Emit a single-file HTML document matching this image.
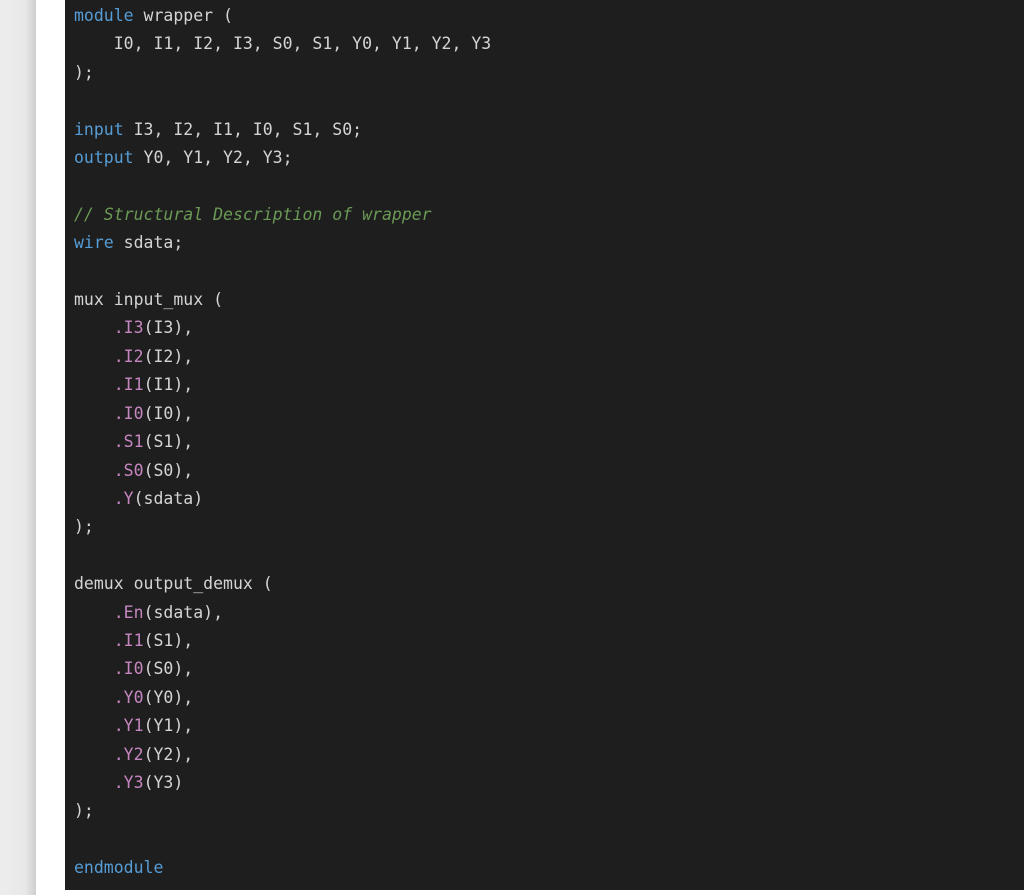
<!DOCTYPE html>
<html><head><style>
html,body{margin:0;padding:0;width:1024px;height:895px;background:#fff;overflow:hidden}
.side{position:absolute;left:0;top:0;width:36px;height:895px;background:linear-gradient(to right,#ededed 0,#e8e8e8 70%,#cfcfcf 100%)}
.code{position:absolute;left:65px;top:0;width:959px;height:890px;background:#1e1e1e}
pre{margin:0;padding:2px 0 0 9px;font-family:"DejaVu Sans Mono","Liberation Mono",monospace;font-size:16.5px;line-height:28.4px;color:#d4d4d4}
.k{color:#569cd6}.c{color:#6a9955;font-style:italic}.p{color:#c586c0}
</style></head><body>
<div class="side"></div>
<div class="code"><pre><span class="k">module</span> wrapper (
    I0, I1, I2, I3, S0, S1, Y0, Y1, Y2, Y3
);

<span class="k">input</span> I3, I2, I1, I0, S1, S0;
<span class="k">output</span> Y0, Y1, Y2, Y3;

<span class="c">// Structural Description of wrapper</span>
<span class="k">wire</span> sdata;

mux input_mux (
    <span class="p">.I3</span>(I3),
    <span class="p">.I2</span>(I2),
    <span class="p">.I1</span>(I1),
    <span class="p">.I0</span>(I0),
    <span class="p">.S1</span>(S1),
    <span class="p">.S0</span>(S0),
    <span class="p">.Y</span>(sdata)
);

demux output_demux (
    <span class="p">.En</span>(sdata),
    <span class="p">.I1</span>(S1),
    <span class="p">.I0</span>(S0),
    <span class="p">.Y0</span>(Y0),
    <span class="p">.Y1</span>(Y1),
    <span class="p">.Y2</span>(Y2),
    <span class="p">.Y3</span>(Y3)
);

<span class="k">endmodule</span></pre></div>
</body></html>
